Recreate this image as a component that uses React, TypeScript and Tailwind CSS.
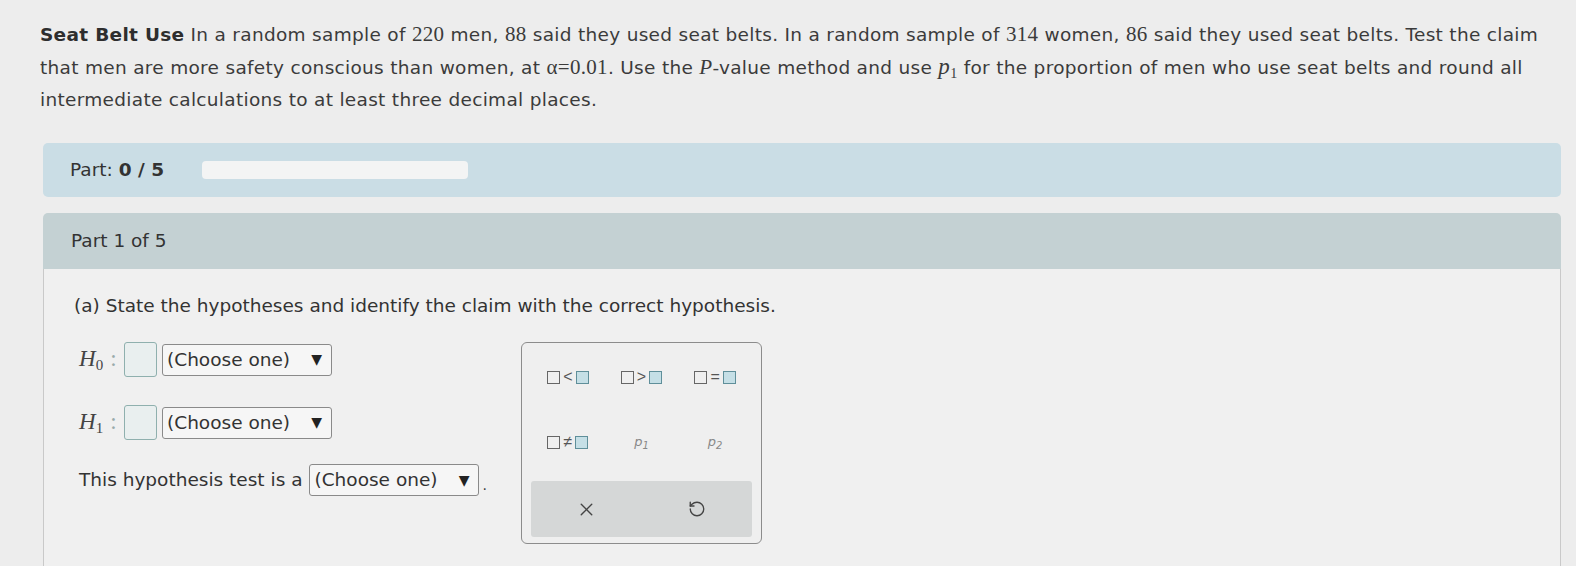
import React from 'react';
import { X, RotateCcw } from 'lucide-react';

const Serif: React.FC<{ children: React.ReactNode; italic?: boolean }> = ({ children, italic }) => (
  <span className={`font-['Liberation_Serif',serif] text-[21px] ${italic ? 'italic' : ''}`}>{children}</span>
);

const Select: React.FC = () => (
  <div className="h-[32px] w-[170px] border-[1.5px] border-[#8a8a8a] rounded-[3px] bg-[#f6f6f6] flex items-center justify-between pl-[4px] pr-[9px] text-[18.5px] text-[#333]">
    <span>(Choose one)</span>
    <span className="text-[14px] text-[#222]">▼</span>
  </div>
);

const Slot: React.FC = () => (
  <div className="h-[35px] w-[33px] border-[1.5px] border-[#8fb0ae] rounded-[3px] bg-[#e9efef]" />
);

const Hyp: React.FC<{ sub: string }> = ({ sub }) => (
  <div className="flex items-center">
    <span className="w-[45px] flex items-baseline font-['Liberation_Serif',serif] italic text-[23px] text-[#444]">
      H<sub className="not-italic text-[15px]">{sub}</sub>
      <span className="not-italic ml-[7px] text-[#9aa]">:</span>
    </span>
    <Slot />
    <div className="ml-[5px]">
      <Select />
    </div>
  </div>
);

const Op: React.FC<{ sym: string }> = ({ sym }) => (
  <div className="flex items-center gap-[3px] text-[16px] text-[#555]">
    <span className="inline-block w-[13px] h-[13px] border-[1.5px] border-[#666]" />
    <span className="font-['Liberation_Sans',sans-serif] leading-none">{sym}</span>
    <span className="inline-block w-[13px] h-[13px] border-[1.5px] border-[#5f8f9a] bg-[#c5dfe6]" />
  </div>
);

export default function App() {
  return (
    <div className="h-[566px] overflow-hidden bg-[#ededed] font-['DejaVu_Sans','Liberation_Sans',sans-serif] text-[#3b3b3b]">
      <div className="pl-[40px] pr-[30px] pt-[18px]">
        <p className="text-[18.5px] leading-[32px] tracking-[0.3px]">
          <span className="font-bold text-[#2e2e2e]">Seat Belt Use</span> In a random sample of <Serif>220</Serif> men,{' '}
          <Serif>88</Serif> said they used seat belts. In a random sample of <Serif>314</Serif> women, <Serif>86</Serif> said they
          used seat belts. Test the claim that men are more safety conscious than women, at <Serif>α=0.01</Serif>. Use the{' '}
          <Serif italic>P</Serif>-value method and use{' '}
          <span className="font-['Liberation_Serif',serif] italic text-[23px] leading-none">
            p<sub className="not-italic text-[14px]">1</sub>
          </span>{' '}
          for the proportion of men who use seat belts and round all intermediate calculations to at least three decimal
          places.
        </p>
      </div>

      <div className="ml-[43px] mr-[15px] mt-[27px]">
        <div className="h-[54px] rounded-[5px] bg-[#cadde5] flex items-center pl-[27px]">
          <span className="text-[18.5px] text-[#333]">
            Part: <span className="font-bold">0 / 5</span>
          </span>
          <div className="ml-[38px] h-[18px] w-[266px] rounded-[4px] bg-[#f3f4f4]" />
        </div>

        <div className="mt-[16px] h-[56px] rounded-t-[5px] bg-[#c4d1d3] flex items-center pl-[28px]">
          <span className="text-[18.5px] text-[#333]">Part 1 of 5</span>
        </div>

        <div className="h-[320px] border-x border-[#c9c9c9] bg-[#f0f0f0] pl-[30px] pt-[24px]">
          <p className="text-[18.5px] leading-[26px] text-[#333]">
            (a) State the hypotheses and identify the claim with the correct hypothesis.
          </p>

          <div className="mt-[23px] flex items-start">
            <div className="w-[447px] pl-[5px]">
              <Hyp sub="0" />
              <div className="mt-[28px]">
                <Hyp sub="1" />
              </div>
              <div className="mt-[24px] flex items-center">
                <span className="text-[18.5px] text-[#333]">This hypothesis test is a</span>
                <div className="ml-[7px]">
                  <Select />
                </div>
                <span className="ml-[3px] mt-[10px] text-[14px]">.</span>
              </div>
            </div>

            <div className="w-[241px] h-[202px] border-[1.5px] border-[#8c8c8c] rounded-[6px] bg-[#efefef] px-[9px] pt-[8px] flex flex-col">
              <div className="grid grid-cols-3 h-[52px] items-center justify-items-center">
                <Op sym="<" />
                <Op sym=">" />
                <Op sym="=" />
              </div>
              <div className="grid grid-cols-3 h-[78px] items-center justify-items-center">
                <Op sym="≠" />
                <span className="italic text-[13px] text-[#888]">
                  p<sub className="text-[10px]">1</sub>
                </span>
                <span className="italic text-[13px] text-[#888]">
                  p<sub className="text-[10px]">2</sub>
                </span>
              </div>
              <div className="h-[56px] rounded-[3px] bg-[#d5d7d7] grid grid-cols-2 items-center justify-items-center">
                <X size={21} strokeWidth={1.6} className="text-[#444]" />
                <RotateCcw size={18} strokeWidth={1.8} className="text-[#444]" />
              </div>
            </div>
          </div>
        </div>
      </div>
    </div>
  );
}
